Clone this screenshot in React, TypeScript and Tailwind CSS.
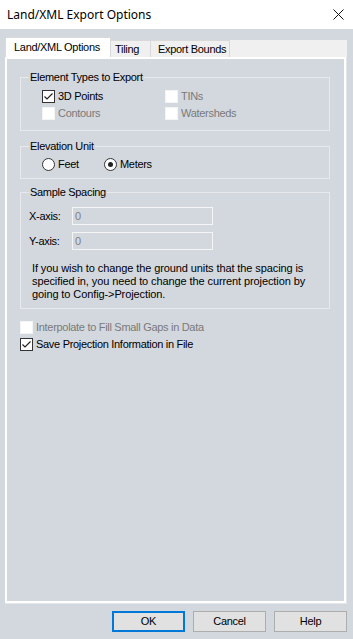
import React from 'react';

const bg = 'bg-[#d3d7de]';

function CheckBox({ label, checked = false, disabled = false }: { label: string; checked?: boolean; disabled?: boolean }) {
  return (
    <div className="flex items-center h-[13px]">
      <span
        className={`w-[13px] h-[13px] shrink-0 bg-white flex items-center justify-center ${
          disabled ? 'border border-[#f4f4f4]' : 'border border-[#333333]'
        }`}
      >
        {checked && (
          <svg width="11" height="11" viewBox="0 0 11 11">
            <polyline points="1.5,5.5 4,8 9.5,2.5" fill="none" stroke="#222" strokeWidth="1.2" />
          </svg>
        )}
      </span>
      <span className={`ml-[3px] whitespace-nowrap ${disabled ? 'text-[#7a7a7a]' : 'text-black'}`}>{label}</span>
    </div>
  );
}

function Radio({ label, selected = false, className }: { label: string; selected?: boolean; className?: string }) {
  return (
    <div className={`flex items-center h-[13px] ${className ?? ''}`}>
      <span className="w-[13px] h-[13px] shrink-0 rounded-full bg-white border border-[#333333] flex items-center justify-center">
        {selected && <span className="w-[5px] h-[5px] rounded-full bg-[#222222]" />}
      </span>
      <span className="ml-[3px] whitespace-nowrap">{label}</span>
    </div>
  );
}

function Group({ title, className, children }: { title: string; className?: string; children: React.ReactNode }) {
  return (
    <fieldset className={`mx-[13px] mr-[14px] border border-[#e7e9ed] ${className ?? ''}`}>
      <legend className="ml-[8px] px-[1px] leading-[13px]">{title}</legend>
      {children}
    </fieldset>
  );
}

function AxisRow({ label, className }: { label: string; className?: string }) {
  return (
    <div className={`flex items-center pl-[8px] ${className ?? ''}`}>
      <span className="w-[43px]">{label}</span>
      <div className="w-[141px] h-[18px] border border-[#f5f5f5] pl-[2px] flex items-center text-[#808080]">0</div>
    </div>
  );
}

export default function App() {
  return (
    <div className={`w-[353px] h-[639px] ${bg} flex flex-col font-['Liberation_Sans',Arial,sans-serif] text-[11px] leading-[13px] tracking-[-0.3px] text-black overflow-hidden`}>
      <div className="h-[29px] bg-white flex items-center justify-between pl-[7px] pr-[9px] shrink-0 tracking-normal">
        <span className="font-['Segoe_UI','Noto_Sans',sans-serif] text-[12px] text-black">Land/XML Export Options</span>
        <svg width="11" height="11" viewBox="0 0 11 11">
          <path d="M0.5 0.5 L10.5 10.5 M10.5 0.5 L0.5 10.5" stroke="#111" strokeWidth="1" />
        </svg>
      </div>

      <div className="px-[5px] pr-[6px] pt-[8px] flex flex-col flex-1">
        <div className="flex items-end h-[20px]">
          <div className="h-[20px] w-[106px] bg-white border border-b-0 border-[#d9d9d9] flex items-center pl-[8px] whitespace-nowrap">
            Land/XML Options
          </div>
          <div className="flex-1 h-[17px] bg-[#f0f0f0] flex items-stretch">
            <div className="w-[40px] border border-b-0 border-l-0 border-[#d9d9d9] flex items-center pl-[4px] whitespace-nowrap">Tiling</div>
            <div className="w-[79px] border border-b-0 border-l-0 border-[#d9d9d9] flex items-center pl-[7px] whitespace-nowrap">Export Bounds</div>
          </div>
        </div>

        <div className="h-[547px] border-b border-r border-[#e4e6ea]">
          <div className="h-full border-2 border-white pt-[12px]">
            <Group title="Element Types to Export" className="pb-[10px]">
              <div className="grid grid-cols-[123px_1fr] gap-y-[4px] pl-[21px] pt-[6px]">
                <CheckBox label="3D Points" checked />
                <CheckBox label="TINs" disabled />
                <CheckBox label="Contours" disabled />
                <CheckBox label="Watersheds" disabled />
              </div>
            </Group>

            <Group title="Elevation Unit" className="mt-[9px] pb-[7px]">
              <div className="flex pl-[21px] pt-[5px]">
                <Radio label="Feet" className="w-[62px]" />
                <Radio label="Meters" selected />
              </div>
            </Group>

            <Group title="Sample Spacing" className="mt-[7px] pb-[7px]">
              <AxisRow label="X-axis:" className="mt-[8px]" />
              <AxisRow label="Y-axis:" className="mt-[7px]" />
              <p className="pl-[11px] mt-[12px] whitespace-nowrap tracking-[-0.1px]">
                If you wish to change the ground units that the spacing is
                <br />
                specified in, you need to change the current projection by
                <br />
                going to Config-&gt;Projection.
              </p>
            </Group>

            <div className="pl-[13px] mt-[12px] flex flex-col gap-[4px]">
              <CheckBox label="Interpolate to Fill Small Gaps in Data" disabled />
              <CheckBox label="Save Projection Information in File" checked />
            </div>
          </div>
        </div>

        <div className="flex justify-end gap-[8px] mt-[7px]">
          <button className="w-[73px] h-[21px] bg-[#e1e1e1] border-2 border-[#0078d7]">OK</button>
          <button className="w-[73px] h-[21px] bg-[#e1e1e1] border border-[#adadad]">Cancel</button>
          <button className="w-[73px] h-[21px] bg-[#e1e1e1] border border-[#adadad]">Help</button>
        </div>
      </div>
    </div>
  );
}
